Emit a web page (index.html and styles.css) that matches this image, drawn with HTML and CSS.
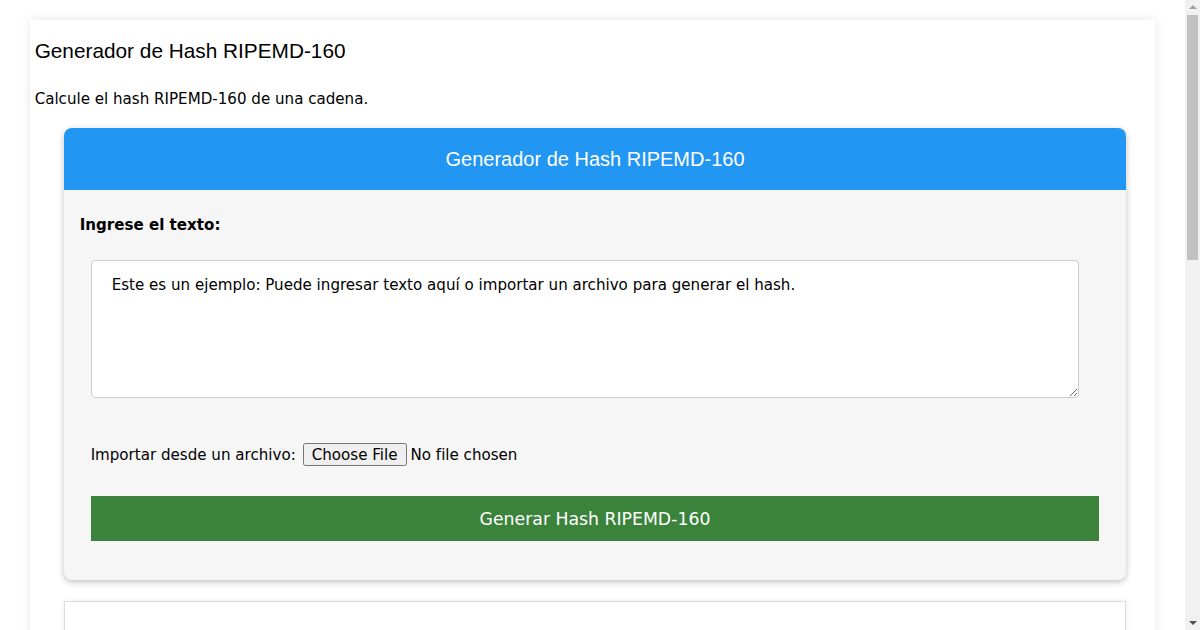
FILE: index.html
```html
<!DOCTYPE html>
<html lang="es">
<head>
<meta charset="utf-8">
<title>Generador de Hash RIPEMD-160</title>
<link rel="stylesheet" href="styles.css">
</head>
<body>
<div class="container">
  <h1 class="page-title">Generador de Hash RIPEMD-160</h1>
  <p class="intro">Calcule el hash RIPEMD-160 de una cadena.</p>
  <div class="card">
    <div class="card-header">Generador de Hash RIPEMD-160</div>
    <div class="card-body">
      <label class="field-label" for="txt">Ingrese el texto:</label>
      <div class="form-group">
        <textarea id="txt" class="input-text">Este es un ejemplo: Puede ingresar texto aquí o importar un archivo para generar el hash.</textarea>
        <div class="file-row">
          <span>Importar desde un archivo:</span>
          <input type="file" class="file-input">
        </div>
        <button class="generate" type="button">Generar Hash RIPEMD-160</button>
      </div>
    </div>
  </div>
  <div class="result-card"></div>
</div>
<div class="scrollbar" aria-hidden="true">
  <span class="sb-arrow sb-up"></span>
  <span class="sb-thumb"></span>
  <span class="sb-arrow sb-down"></span>
</div>
</body>
</html>
```
FILE: styles.css
```css
html, body {
  margin: 0;
  padding: 0;
  background: #ffffff;
}
body {
  font-family: "DejaVu Sans", Verdana, sans-serif;
  font-size: 15.1px;
  color: #000;
  margin-right: 15px;
  padding-top: 20px;
}
.container {
  width: 95%;
  margin: 0 auto 20px;
  padding: 19px 5px 30px;
  box-sizing: border-box;
  background: #fff;
  box-shadow: 0 0 10px rgba(0, 0, 0, 0.1);
}
.page-title {
  font-family: "Liberation Sans", Arial, sans-serif;
  font-weight: normal;
  font-size: 20.8px;
  line-height: 24px;
  margin: 0;
}
.intro {
  margin: 27px 0 0;
  line-height: 18px;
}
.card {
  margin: 20px 24px 0 29px;
  border-radius: 8px;
  background: #f6f6f6;
  box-shadow: 0 2px 6px rgba(0, 0, 0, 0.25);
  overflow: hidden;
}
.card-header {
  background: #2196f3;
  color: #fff;
  font-family: "Liberation Sans", Arial, sans-serif;
  font-size: 20px;
  height: 62px;
  display: flex;
  align-items: center;
  justify-content: center;
}
.card-body {
  padding: 26px 16px 39px;
}
.field-label {
  display: block;
  font-weight: bold;
  line-height: 18px;
  margin-bottom: 26px;
}
.form-group {
  padding: 0 11px;
}
.input-text {
  display: block;
  box-sizing: border-box;
  width: calc(100% - 20px);
  height: 138px;
  padding: 15px 20px;
  border: 1px solid #ccc;
  border-radius: 4px;
  background: #fff;
  font-family: "DejaVu Sans", Verdana, sans-serif;
  font-size: 15.1px;
  line-height: 18px;
  color: #000;
}
.file-row {
  display: flex;
  align-items: center;
  gap: 7px;
  margin-top: 45px;
  height: 23px;
  line-height: 18px;
}
.file-input {
  font-family: "DejaVu Sans", Verdana, sans-serif;
  font-size: 15.1px;
}
.file-input::file-selector-button {
  font: inherit;
  height: 23px;
  padding: 0 7px;
  margin-right: 4px;
}
.generate {
  display: block;
  width: 100%;
  height: 45px;
  margin-top: 30px;
  border: none;
  background: #3b833b;
  color: #fff;
  font-family: "DejaVu Sans", Verdana, sans-serif;
  font-size: 17.3px;
}
.result-card {
  margin: 21px 24px 0 29px;
  height: 160px;
  background: #fff;
  border: 1px solid #ddd;
  box-shadow: 0 0 6px rgba(0, 0, 0, 0.08);
}
.scrollbar {
  position: fixed;
  top: 0;
  right: 0;
  width: 15px;
  height: 100%;
  background: #f1f1f1;
}
.sb-thumb {
  position: absolute;
  top: 15px;
  left: 2px;
  width: 11px;
  height: 245px;
  background: #c1c1c1;
}
.sb-arrow {
  position: absolute;
  left: 4px;
  width: 0;
  height: 0;
  border-left: 4px solid transparent;
  border-right: 4px solid transparent;
}
.sb-up {
  top: 5px;
  border-bottom: 4px solid #a3a3a3;
}
.sb-down {
  bottom: 5px;
  border-top: 4px solid #505050;
}
```
